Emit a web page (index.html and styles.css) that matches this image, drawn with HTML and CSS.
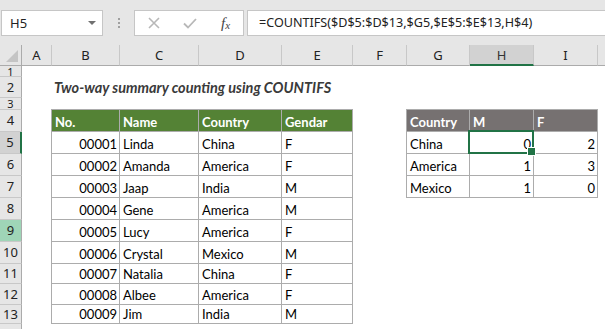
FILE: index.html
```html
<!DOCTYPE html>
<html>
<head>
<meta charset="utf-8">
<link rel="stylesheet" href="styles.css">
</head>
<body>
<div class="app">
  <div class="topbar">
    <div class="namebox"><span class="ref">H5</span><span class="dd"></span></div>
    <div class="grip"><i></i><i></i><i></i></div>
    <div class="btns">
      <svg class="ic" width="12" height="12" viewBox="0 0 12 12"><path d="M1 1L11 11M11 1L1 11" stroke="#b8b8b8" stroke-width="1.6" fill="none"/></svg>
      <svg class="ic ok" width="14" height="11" viewBox="0 0 14 11"><path d="M1 5.5L5 9.5L13 1" stroke="#b8b8b8" stroke-width="1.8" fill="none"/></svg>
      <span class="fx">f<sub>x</sub></span>
    </div>
    <div class="formula">=COUNTIFS($D$5:$D$13,$G5,$E$5:$E$13,H$4)</div>
  </div>

  <div class="colheads">
    <div class="ch corner"><svg width="12" height="12" viewBox="0 0 12 12"><path d="M12 0L12 12L0 12Z" fill="#c4c4c4"/></svg></div>
    <div class="ch w-a">A</div>
    <div class="ch w-b">B</div>
    <div class="ch w-c">C</div>
    <div class="ch w-d">D</div>
    <div class="ch w-e">E</div>
    <div class="ch w-f">F</div>
    <div class="ch w-g">G</div>
    <div class="ch w-h sel">H</div>
    <div class="ch w-i">I</div>
    <div class="ch w-j"></div>
  </div>

  <div class="main">
    <div class="rowheads">
      <div class="rh h11">1</div>
      <div class="rh h21">2</div>
      <div class="rh h12">3</div>
      <div class="rh h22">4</div>
      <div class="rh h22 sel">5</div>
      <div class="rh h22">6</div>
      <div class="rh h22">7</div>
      <div class="rh h22">8</div>
      <div class="rh h22 hov">9</div>
      <div class="rh h22">10</div>
      <div class="rh h20">11</div>
      <div class="rh h21">12</div>
      <div class="rh h19">13</div>
      <div class="rh h22"></div>
    </div>

    <div class="sheet">
      <div class="title">Two-way summary counting using COUNTIFS</div>
      <div class="tables">
        <div class="tbl left">
          <div class="c hd">No.</div><div class="c hd">Name</div><div class="c hd">Country</div><div class="c hd">Gendar</div>
          <div class="c num">00001</div><div class="c">Linda</div><div class="c">China</div><div class="c">F</div>
          <div class="c num">00002</div><div class="c">Amanda</div><div class="c">America</div><div class="c">F</div>
          <div class="c num">00003</div><div class="c">Jaap</div><div class="c">India</div><div class="c">M</div>
          <div class="c num">00004</div><div class="c">Gene</div><div class="c">America</div><div class="c">M</div>
          <div class="c num">00005</div><div class="c">Lucy</div><div class="c">America</div><div class="c">F</div>
          <div class="c num">00006</div><div class="c">Crystal</div><div class="c">Mexico</div><div class="c">M</div>
          <div class="c num">00007</div><div class="c">Natalia</div><div class="c">China</div><div class="c">F</div>
          <div class="c num">00008</div><div class="c">Albee</div><div class="c">America</div><div class="c">F</div>
          <div class="c num">00009</div><div class="c">Jim</div><div class="c">India</div><div class="c">M</div>
        </div>
        <div class="tbl right">
          <div class="c hd2">Country</div><div class="c hd2">M</div><div class="c hd2">F</div>
          <div class="c">China</div><div class="c num active">0</div><div class="c num">2</div>
          <div class="c">America</div><div class="c num">1</div><div class="c num">3</div>
          <div class="c">Mexico</div><div class="c num">1</div><div class="c num">0</div>
        </div>
      </div>
    </div>
  </div>
</div>
</body>
</html>
```

FILE: styles.css
```css
* { box-sizing: border-box; margin: 0; padding: 0; }
html, body { width: 605px; height: 329px; overflow: hidden; background: #fff; }
body { font-family: "Lato", sans-serif; color: #000; }

.app { display: flex; flex-direction: column; height: 329px; overflow: hidden; }

/* ---------- formula bar ---------- */
.topbar {
  flex: none; height: 45px; background: #e6e6e6;
  display: flex; align-items: flex-start; padding-top: 10px;
}
.namebox {
  margin-left: 1px; width: 102px; height: 26px; background: #fff;
  border: 1px solid #c6c6c6; display: flex; align-items: center;
  justify-content: space-between; padding: 0 6px 0 8px;
  font-family: "Noto Sans", sans-serif; font-size: 13px; color: #222;
}
.dd { width: 0; height: 0; border-left: 4px solid transparent; border-right: 4px solid transparent; border-top: 4px solid #707070; }
.grip { width: 31px; height: 26px; display: flex; flex-direction: column; align-items: center; justify-content: center; gap: 2px; }
.grip i { display: block; width: 2px; height: 2px; background: #a0a0a0; }
.btns {
  width: 110px; height: 26px; background: #fff; border: 1px solid #c6c6c6;
  display: flex; align-items: center; padding-left: 13px;
}
.btns .ok { margin-left: 23px; }
.fx {
  margin-left: 24px; font-family: "Liberation Serif", serif; font-style: italic;
  font-size: 15px; color: #444; line-height: 1;
}
.fx sub { font-size: 11px; vertical-align: -1px; }
.formula {
  flex: 1; margin-left: 3px; height: 26px; background: #fff;
  border: 1px solid #c6c6c6; border-right: none; padding-left: 11px;
  font-family: "Noto Sans", sans-serif; font-size: 12.6px; line-height: 24px; color: #222;
  white-space: nowrap; overflow: hidden;
}

/* ---------- column headers ---------- */
.colheads { flex: none; height: 21px; display: flex; background: #e6e6e6; }
.ch {
  height: 21px; border-right: 1px solid #c8c8c8; border-bottom: 1px solid #ababab;
  display: flex; align-items: center; justify-content: center;
  font-family: "Noto Sans", sans-serif; font-size: 13px; color: #222; flex: none;
}
.corner { width: 22px; border-right-color: #ababab; align-items: flex-end; justify-content: flex-end; padding: 0 3px 3px 0; }
.w-a { width: 30px; } .w-b { width: 68px; } .w-c { width: 79px; } .w-d { width: 83px; }
.w-e { width: 71px; } .w-f { width: 54px; } .w-g { width: 63px; } .w-h { width: 64px; }
.w-i { width: 64px; } .w-j { flex: 1; border-right: none; }
.ch.sel { background: #d2d2d2; border-bottom: 2px solid #217346; color: #333; }

/* ---------- body ---------- */
.main { flex: 1; display: flex; min-height: 0; overflow: hidden; }
.rowheads { flex: none; width: 22px; display: flex; flex-direction: column; background: #e6e6e6; }
.rh {
  flex: none; border-right: 1px solid #ababab; border-bottom: 1px solid #c8c8c8;
  display: flex; align-items: center; justify-content: center;
  font-family: "Noto Sans", sans-serif; font-size: 13px; color: #222; overflow: hidden;
  line-height: 1;
}
.h11 { height: 11px; } .h12 { height: 12px; } .h19 { height: 19px; } .h20 { height: 20px; }
.h21 { height: 21px; } .h22 { height: 22px; }
.rh.h11, .rh.h12 { font-size: 11px; }
.rh.sel { background: #d2d2d2; border-right: 2px solid #217346; }
.rh.hov { background: #9fd5b7; }

.sheet { flex: 1; display: flex; flex-direction: column; }
.title {
  flex: none; height: 43px; padding: 11px 0 0 32px; line-height: 21px;
  font-size: 14.5px; font-weight: 700; font-style: italic; color: #3a3a3a; white-space: nowrap;
}
.tables { display: flex; align-items: flex-start; margin-left: 29px; gap: 53px; }
.tbl { display: grid; border-left: 1px solid #acacac; border-top: 1px solid #acacac; }
.left { grid-template-columns: 68px 79px 83px 71px; grid-template-rows: 22px 22px 22px 22px 22px 22px 22px 20px 21px 19px; }
.right { grid-template-columns: 63px 64px 64px; grid-template-rows: 22px 22px 22px 22px; }
.c {
  border-right: 1px solid #acacac; border-bottom: 1px solid #acacac;
  display: flex; align-items: flex-end; padding: 0 3px 1px 3px;
  font-size: 13px; line-height: 16px; white-space: nowrap;
}
.num { justify-content: flex-end; padding-right: 2px; }
.hd { background: #548235; color: #fff; font-weight: 700; }
.hd2 { background: #767171; color: #fff; font-weight: 700; }
.active { position: relative; }
.active::before {
  content: ""; position: absolute; left: -2px; top: -2px; right: -1px; bottom: -1px;
  border: 2px solid #217346;
}
.active::after {
  content: ""; position: absolute; right: -3px; bottom: -3px; width: 7px; height: 7px;
  background: #217346; border: 1px solid #fff;
}
```
